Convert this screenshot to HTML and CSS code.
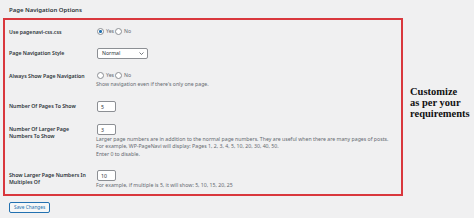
FILE: index.html
```html
<!DOCTYPE html>
<html lang="en">
<head>
  <meta charset="UTF-8">
  <title>Page Navigation Options</title>
  <link rel="stylesheet" href="styles.css">
</head>
<body>
  <div class="wrap">
    <h2 class="title">Page Navigation Options</h2>

    <div class="content">
      <div class="options">
        <div class="row">
          <div class="label">Use pagenavi-css.css</div>
          <div class="field">
            <div class="radios">
              <span class="radio checked"></span><span class="opt">Yes</span>
              <span class="radio"></span><span class="opt">No</span>
            </div>
          </div>
        </div>

        <div class="row">
          <div class="label">Page Navigation Style</div>
          <div class="field">
            <div class="select">
              <span>Normal</span>
              <svg width="5" height="3" viewBox="0 0 10 6"><path d="M1 1l4 4 4-4" fill="none" stroke="#50575e" stroke-width="1.6"/></svg>
            </div>
          </div>
        </div>

        <div class="row">
          <div class="label">Always Show Page Navigation</div>
          <div class="field">
            <div class="radios">
              <span class="radio"></span><span class="opt">Yes</span>
              <span class="radio"></span><span class="opt">No</span>
            </div>
            <p class="desc">Show navigation even if there's only one page.</p>
          </div>
        </div>

        <div class="row">
          <div class="label">Number Of Pages To Show</div>
          <div class="field">
            <div class="input">5</div>
          </div>
        </div>

        <div class="row">
          <div class="label">Number Of Larger Page Numbers To Show</div>
          <div class="field">
            <div class="input">3</div>
            <p class="desc">Larger page numbers are in addition to the normal page numbers. They are useful when there are many pages of posts.<br>
            For example, WP-PageNavi will display: Pages 1, 2, 3, 4, 5, 10, 20, 30, 40, 50.<br>
            Enter 0 to disable.</p>
          </div>
        </div>

        <div class="row">
          <div class="label">Show Larger Page Numbers In Multiples Of</div>
          <div class="field">
            <div class="input">10</div>
            <p class="desc">For example, if multiple is 5, it will show: 5, 10, 15, 20, 25</p>
          </div>
        </div>
      </div>

      <p class="note">Customize<br>as per your<br>requirements</p>
    </div>

    <button class="button">Save Changes</button>
  </div>
</body>
</html>
```

FILE: styles.css
```css
:root {
  --red: #d9373d;
  --blue: #2271b1;
  --text: #2c3338;
  --muted: #646970;
  --bg: #f0f0f1;
}

body {
  margin: 0;
  background-color: var(--bg);
  font-family: 'Noto Sans', 'Open Sans', sans-serif;
  color: var(--text);
}

.wrap {
  padding: 6px 0 0 3px;
}

.title {
  margin: 0 0 4px 6px;
  font-size: 6px;
  line-height: 8px;
  font-weight: 600;
}

.content {
  display: flex;
  gap: 7px;
}

.options {
  width: 396px;
  border: 2px solid var(--red);
  padding: 1px 0 0 0;
}

.row {
  display: flex;
  padding: 6px 0 6px 4px;
}

.row:last-child {
  padding-bottom: 4px;
}

.label {
  width: 87px;
  flex-shrink: 0;
  padding-top: 2px;
  padding-right: 7px;
  box-sizing: border-box;
  font-size: 5.2px;
  line-height: 7px;
  font-weight: 600;
}

.field {
  font-size: 5.2px;
  line-height: 7.5px;
  color: var(--muted);
}

.radios {
  display: flex;
  align-items: center;
  height: 9px;
  padding-left: 1px;
}

.radio {
  width: 5px;
  height: 5px;
  border: 0.8px solid #8c8f94;
  border-radius: 50%;
  background: #fff;
  margin-right: 2px;
  position: relative;
}

.radio.checked::after {
  content: "";
  position: absolute;
  left: 1.3px;
  top: 1.3px;
  width: 2.4px;
  height: 2.4px;
  border-radius: 50%;
  background: var(--blue);
}

.opt {
  margin-right: 1px;
}

.select {
  display: flex;
  justify-content: space-between;
  align-items: center;
  width: 51px;
  height: 11px;
  box-sizing: border-box;
  margin-left: 1px;
  padding: 0 3px 0 4px;
  border: 0.8px solid #8c8f94;
  border-radius: 2px;
  background: #fff;
  color: var(--text);
}

.input {
  width: 19px;
  height: 11px;
  box-sizing: border-box;
  margin-left: 1px;
  padding: 2px 0 0 3px;
  line-height: 7px;
  border: 0.8px solid #8c8f94;
  border-radius: 2px;
  background: #fff;
  color: var(--text);
}

.desc {
  margin: 1px 0 0 0;
}

.note {
  align-self: center;
  margin: 0 0 8px 0;
  font-family: 'Liberation Serif', serif;
  font-weight: bold;
  font-size: 10.5px;
  line-height: 11px;
  color: #111;
}

.button {
  display: block;
  margin: 6px 0 0 6px;
  height: 11px;
  padding: 0 4px;
  font-family: 'Noto Sans', sans-serif;
  font-size: 4.8px;
  color: var(--blue);
  background: #f6f7f7;
  border: 0.8px solid var(--blue);
  border-radius: 2px;
}
```
